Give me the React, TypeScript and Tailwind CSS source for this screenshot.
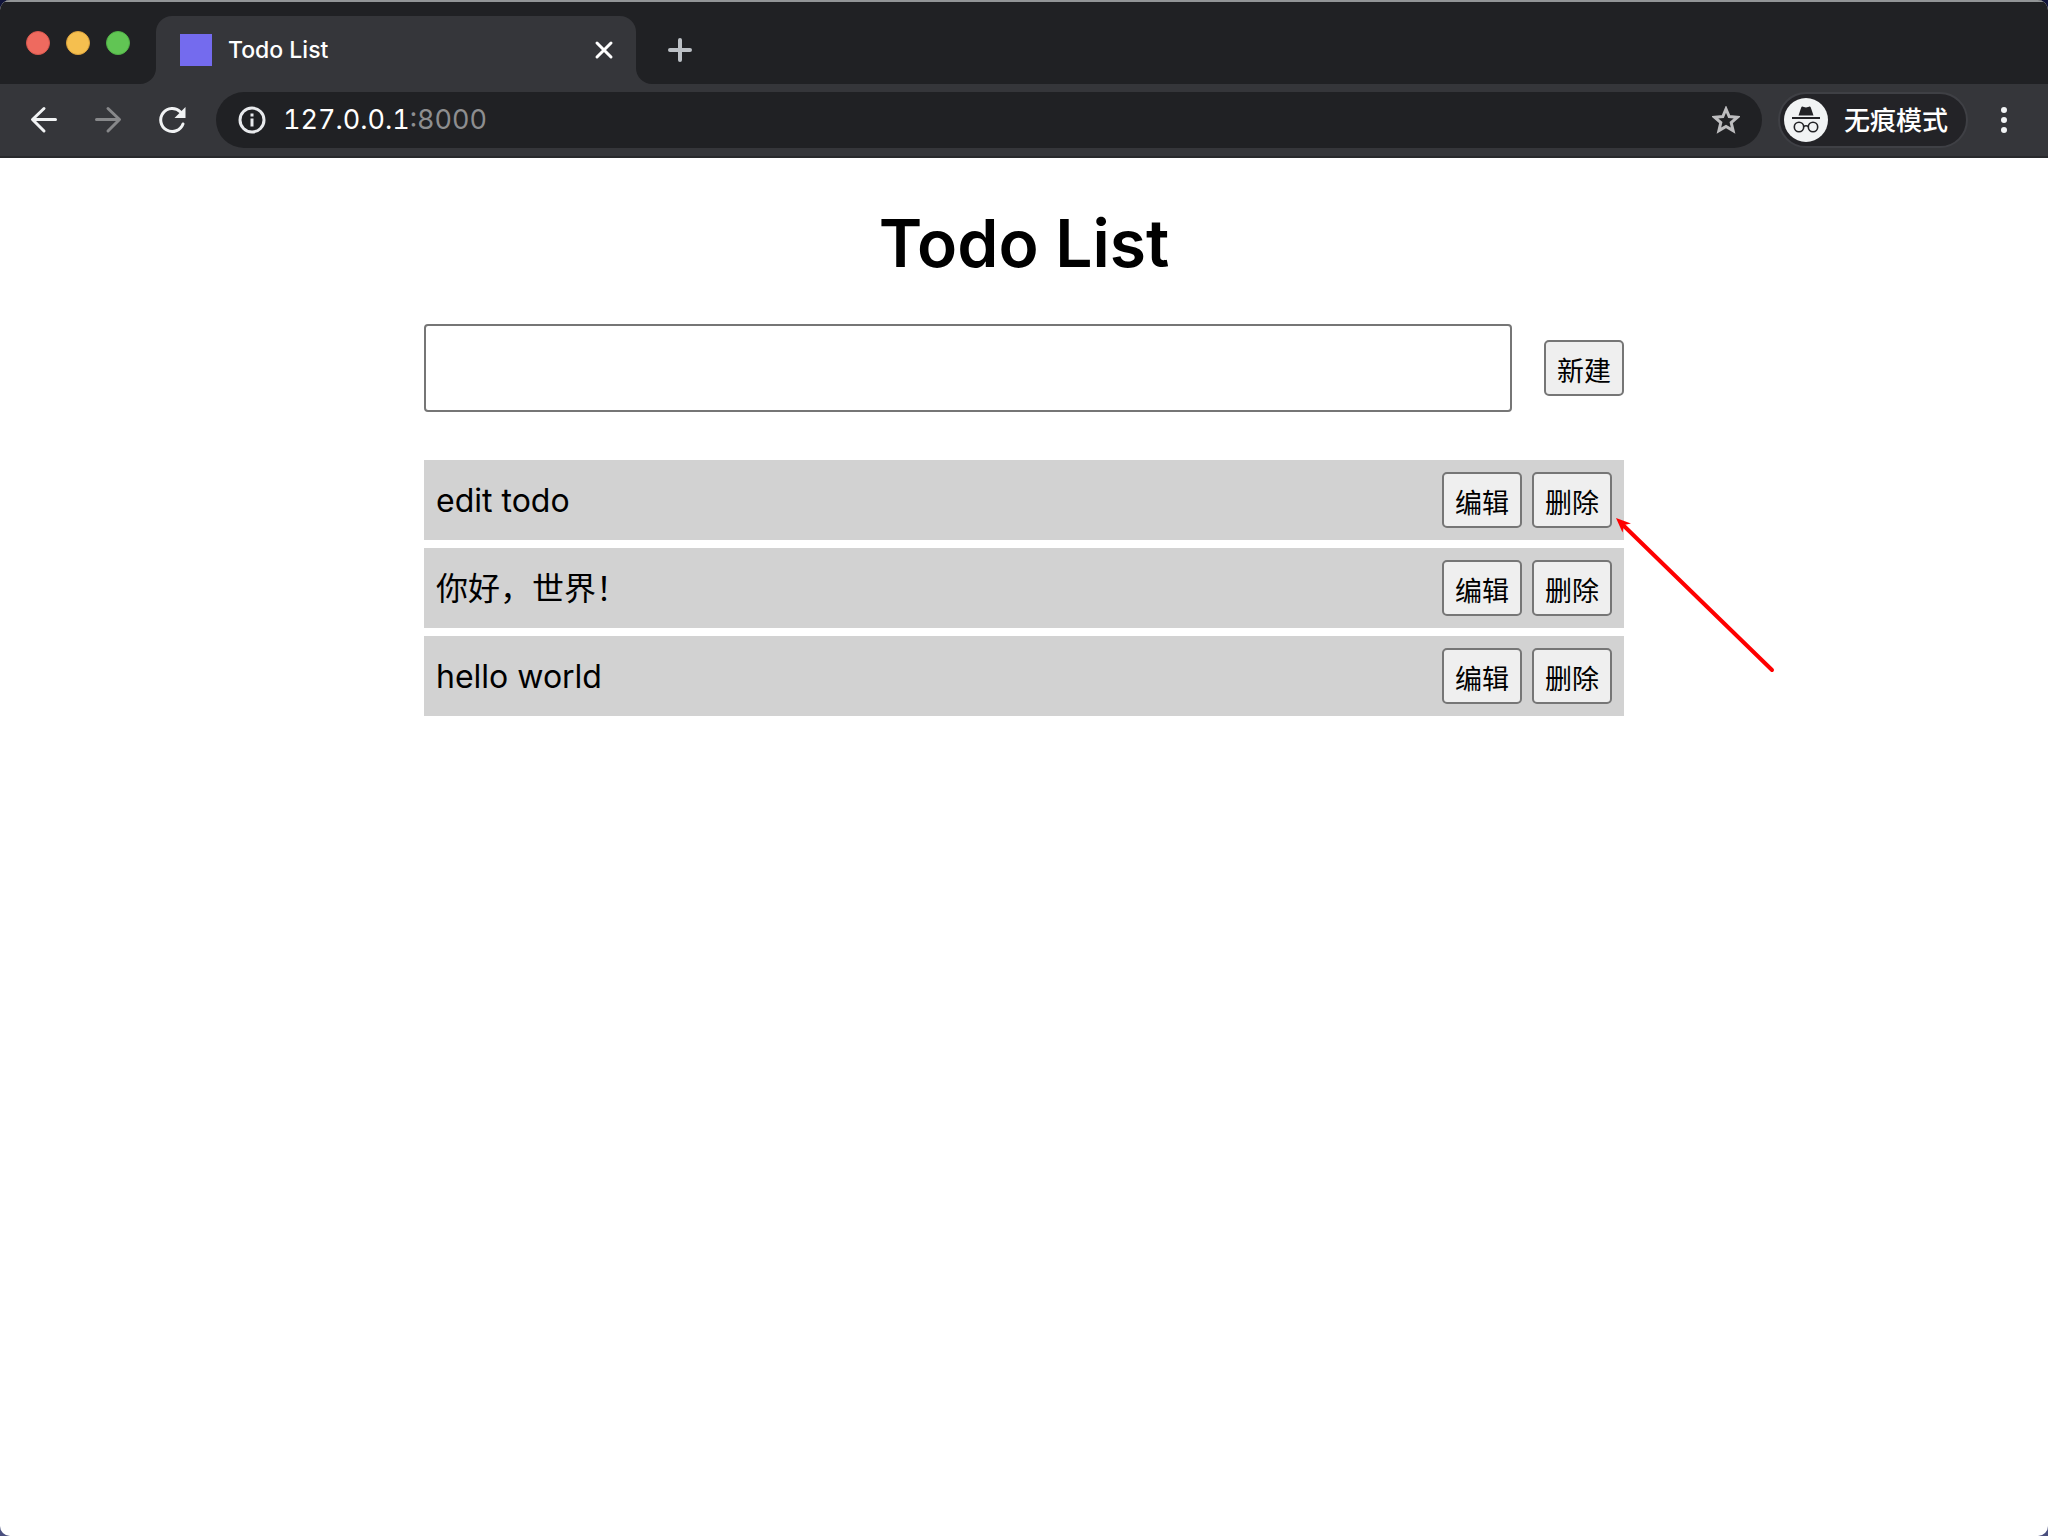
import { useState } from "react"
import type { FormEvent, ReactNode } from "react"

type Todo = {
  id: number
  content: string
}

const initialTodos: Todo[] = [
  { id: 3, content: "edit todo" },
  { id: 2, content: "你好，世界！" },
  { id: 1, content: "hello world" },
]

function TabStrip() {
  return (
    <div className="flex h-[84px] items-end border-t-2 border-[#929597] bg-[#202124]">
      <div className="flex w-[140px] items-center gap-4 self-start pt-[29px] pl-[26px]">
        <span className="h-6 w-6 rounded-full border border-[#d9584e] bg-[#ee6a5f]" />
        <span className="h-6 w-6 rounded-full border border-[#dba23c] bg-[#f5bf4f]" />
        <span className="h-6 w-6 rounded-full border border-[#50b146] bg-[#61c554]" />
      </div>

      <TabCorner className="" />
      <div className="flex h-[68px] w-[480px] items-center rounded-t-2xl bg-[#35363a] pr-5 pl-6">
        <span className="h-8 w-8 bg-[#746bee]" />
        <span className="ml-4 flex-1 text-[23px] leading-8 font-medium text-white">Todo List</span>
        <button type="button" aria-label="关闭标签页" className="text-white">
          <svg className="h-6 w-6" viewBox="0 0 24 24" fill="none" stroke="currentColor" strokeWidth="3" strokeLinecap="round">
            <path d="M5 5l14 14M19 5L5 19" />
          </svg>
        </button>
      </div>
      <TabCorner className="-scale-x-100" />

      <button type="button" aria-label="打开新的标签页" className="mb-[22px] ml-4 text-[#bdc1c6]">
        <svg className="h-6 w-6" viewBox="0 0 24 24" fill="none" stroke="currentColor" strokeWidth="4" strokeLinecap="round">
          <path d="M12 2v20M2 12h20" />
        </svg>
      </button>
    </div>
  )
}

// 标签页底部的外扩圆角
function TabCorner({ className }: { className: string }) {
  return (
    <svg className={`h-4 w-4 ${className}`} viewBox="0 0 16 16" fill="#35363a">
      <path d="M16 0v16H0A16 16 0 0 0 16 0z" />
    </svg>
  )
}

function NavButton({ label, className, children }: { label: string; className: string; children: ReactNode }) {
  return (
    <button type="button" aria-label={label} className={className}>
      <svg className="h-8 w-8" viewBox="0 0 32 32" fill="none" stroke="currentColor" strokeWidth="3" strokeLinecap="round" strokeLinejoin="round">
        {children}
      </svg>
    </button>
  )
}

function Toolbar() {
  return (
    <div className="flex h-[74px] items-center border-b-2 border-[#28292c] bg-[#35363a] pl-7">
      <div className="flex items-center gap-8">
        <NavButton label="返回" className="text-[#f1f3f4]">
          <path d="M27.500 15.500H5M16 4.500L4.500 15.500L16 27" />
        </NavButton>
        <NavButton label="前进" className="text-[#87888a]">
          <path d="M4.500 15.500H27M16 4.500L27.500 15.500L16 27" />
        </NavButton>
        <NavButton label="重新加载" className="text-[#f1f3f4]">
          <path d="M27 20A11.500 11.500 0 1 1 24.500 8" />
          <path d="M29.500 3v11h-11z" fill="currentColor" stroke="none" />
        </NavButton>
      </div>

      <div className="ml-7 flex h-14 flex-1 items-center rounded-full bg-[#202124] px-[22px]">
        <svg className="h-7 w-7" viewBox="0 0 28 28" fill="none" stroke="#e8eaed" strokeWidth="3">
          <circle cx="14" cy="14" r="12" />
          <path d="M14 12.500v8M14 7.500v3" />
        </svg>
        <span className="ml-[17px] flex-1 text-[27px] leading-9 text-white tabular-nums">
          127.0.0.1<span className="text-[#8d8e90]">:8000</span>
        </span>
        <button type="button" aria-label="为此标签页添加书签" className="text-[#bdbdbf]">
          <svg className="h-7 w-7" viewBox="0 0 28 28" fill="none" stroke="currentColor" strokeWidth="3">
            <path d="M14 3l3.200 7.500 8.300.7-6.300 5.400 1.900 8-7.100-4.200-7.100 4.200 1.900-8L2.500 11.200l8.300-.7z" />
          </svg>
        </button>
      </div>

      <button
        type="button"
        className="ml-4 flex h-14 items-center rounded-full border-2 border-[#3f4045] bg-[#232327] pr-[18px] pl-1 text-[26px] leading-9 text-white"
      >
        <svg className="mr-4 h-11 w-11" viewBox="0 0 44 44" fill="none">
          <circle cx="22" cy="22" r="22" fill="#f1f3f4" />
          <path d="M14.500 17.500l2.700-8c.3-.9 1-1.100 1.800-.8l3 .9 3-.9c.8-.3 1.500-.1 1.800.8l2.700 8z" fill="#232327" />
          <path d="M8 20h28" stroke="#232327" strokeWidth="2" />
          <circle cx="15" cy="29" r="4.700" stroke="#232327" strokeWidth="1.600" />
          <circle cx="29" cy="29" r="4.700" stroke="#232327" strokeWidth="1.600" />
          <path d="M19.500 28.500q2.500-1.500 5 0" stroke="#232327" strokeWidth="1.600" />
        </svg>
        <span className="pt-0.5 font-medium">无痕模式</span>
      </button>

      <button type="button" aria-label="更多" className="mr-7 ml-5 text-[#f1f3f4]">
        <svg className="h-8 w-8" viewBox="0 0 32 32" fill="currentColor">
          <circle cx="16" cy="6" r="3" />
          <circle cx="16" cy="16" r="3" />
          <circle cx="16" cy="26" r="3" />
        </svg>
      </button>
    </div>
  )
}

function TodoButton({ type = "button", onClick, children }: { type?: "button" | "submit"; onClick?: () => void; children: ReactNode }) {
  return (
    <button
      type={type}
      onClick={onClick}
      className="h-14 w-20 rounded-[5px] border-2 border-[#767676] bg-[#efefef] pt-2 text-[27px] leading-9 text-black"
    >
      {children}
    </button>
  )
}

function TodoPage() {
  const [todos, setTodos] = useState(initialTodos)
  const [content, setContent] = useState("")

  const handleSubmit = (e: FormEvent) => {
    e.preventDefault()
    if (!content) return
    setTodos([{ id: Date.now(), content }, ...todos])
    setContent("")
  }

  const handleEdit = (todo: Todo) => {
    const next = prompt("编辑", todo.content)
    if (next) setTodos(todos.map((t) => (t.id === todo.id ? { ...t, content: next } : t)))
  }

  const handleDelete = (id: number) => {
    setTodos(todos.filter((t) => t.id !== id))
  }

  return (
    <main className="mx-auto w-full max-w-[1200px] pt-[46px] text-black">
      <h1 className="text-center text-[66px] leading-[78px] font-semibold">Todo List</h1>

      <form onSubmit={handleSubmit} className="mt-[42px] flex items-center gap-8">
        <input
          type="text"
          aria-label="Todo"
          value={content}
          onChange={(e) => setContent(e.target.value)}
          className="h-[88px] min-w-0 flex-1 rounded-[4px] border-2 border-[#767676] bg-white px-3 text-[32px]"
        />
        <TodoButton type="submit">新建</TodoButton>
      </form>

      <div className="relative mt-12">
        <ul className="flex flex-col gap-2">
          {todos.map((todo) => (
            <li key={todo.id} className="flex h-20 items-center gap-[10px] bg-[#d2d2d2] px-3">
              <span className="flex-1 pt-0.5 text-[32px] leading-10">{todo.content}</span>
              <TodoButton onClick={() => handleEdit(todo)}>编辑</TodoButton>
              <TodoButton onClick={() => handleDelete(todo.id)}>删除</TodoButton>
            </li>
          ))}
        </ul>

        {/* 指向删除按钮的箭头 */}
        <svg className="pointer-events-none absolute top-14 left-full -ml-3 h-40 w-[164px]" viewBox="0 0 164 160">
          <path d="M12 10L160 154" stroke="#fe0000" strokeWidth="4" strokeLinecap="round" />
          <path d="M4 2l15 5.500-7 1.500-1.500 7.500z" fill="#fe0000" />
        </svg>
      </div>
    </main>
  )
}

export default function App() {
  return (
    <div className="min-h-screen bg-linear-to-b from-[#10143a] to-[#4a4f7e] font-['Inter','Noto_Sans_CJK_SC',sans-serif]">
      <div className="min-h-screen overflow-hidden rounded-[10px] bg-white">
        <TabStrip />
        <Toolbar />
        <TodoPage />
      </div>
    </div>
  )
}
